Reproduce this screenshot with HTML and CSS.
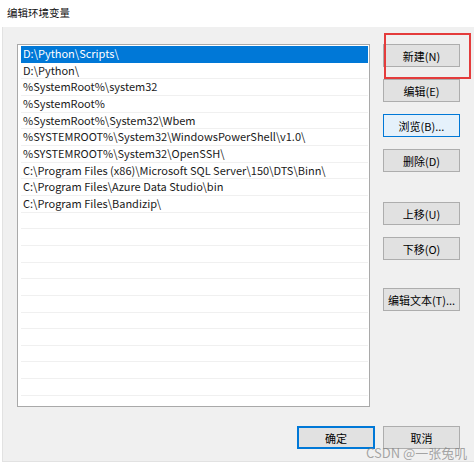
FILE: index.html
```html
<!DOCTYPE html>
<html lang="zh-CN">
<head>
<meta charset="utf-8">
<title>编辑环境变量</title>
<link rel="stylesheet" href="styles.css">
</head>
<body>
<div class="dialog">
  <div class="titlebar">编辑环境变量</div>
  <div class="panel">
    <div class="main">
      <div class="list">
        <div class="row selected">D:\Python\Scripts\</div>
        <div class="row">D:\Python\</div>
        <div class="row">%SystemRoot%\system32</div>
        <div class="row">%SystemRoot%</div>
        <div class="row">%SystemRoot%\System32\Wbem</div>
        <div class="row">%SYSTEMROOT%\System32\WindowsPowerShell\v1.0\</div>
        <div class="row">%SYSTEMROOT%\System32\OpenSSH\</div>
        <div class="row">C:\Program Files (x86)\Microsoft SQL Server\150\DTS\Binn\</div>
        <div class="row">C:\Program Files\Azure Data Studio\bin</div>
        <div class="row">C:\Program Files\Bandizip\</div>
        <div class="row"></div>
        <div class="row"></div>
        <div class="row"></div>
        <div class="row"></div>
        <div class="row"></div>
        <div class="row"></div>
        <div class="row"></div>
        <div class="row"></div>
        <div class="row"></div>
        <div class="row"></div>
        <div class="row"></div>
        <div class="row"></div>
        <div class="row"></div>
      </div>
      <div class="side">
        <button class="btn">新建(N)</button>
        <button class="btn">编辑(E)</button>
        <button class="btn focus">浏览(B)...</button>
        <button class="btn">删除(D)</button>
        <button class="btn gap-lg">上移(U)</button>
        <button class="btn">下移(O)</button>
        <button class="btn gap-md">编辑文本(T)...</button>
      </div>
    </div>
    <div class="footer">
      <button class="btn ok">确定</button>
      <button class="btn cancel">取消</button>
    </div>
  </div>
  <div class="highlight"></div>
  <div class="watermark">CSDN @一张兔叽</div>
</div>
</body>
</html>
```
FILE: styles.css
```css
* { box-sizing: border-box; }
html, body {
  margin: 0;
  padding: 0;
  background: #ffffff;
}
body {
  font-family: "Noto Sans CJK SC", "Noto Sans", sans-serif;
  font-size: 11px;
  color: #000;
}
.dialog {
  position: relative;
  width: 474px;
  height: 464px;
  overflow: hidden;
}
.titlebar {
  height: 27px;
  padding-left: 7px;
  padding-top: 5px;
  font-size: 10.5px;
  line-height: 16px;
  color: #111;
}
.panel {
  margin-left: 2px;
  height: 435px;
  background: #f0f0f0;
  border-left: 1px solid #e2e2e2;
  border-bottom: 1px solid #e2e2e2;
  padding: 17px 0 0 14px;
  display: flex;
  flex-direction: column;
}
.main {
  display: flex;
  gap: 13px;
}
.list {
  width: 353px;
  height: 363px;
  background: #fff;
  border: 1px solid #a9a9a9;
  padding: 1px 1px 0 3px;
  overflow: hidden;
}
.row {
  height: 16.67px;
  line-height: 15px;
  padding-left: 2px;
  border-bottom: 1px solid #f0f0f0;
  white-space: nowrap;
  font-size: 11px;
  color: #1a1a1a;
}
.row.selected {
  background: #0078d7;
  color: #fff;
  border-bottom-color: #0078d7;
}
.side {
  display: flex;
  flex-direction: column;
  gap: 12px;
}
.btn {
  width: 77px;
  height: 23px;
  padding: 0;
  margin: 0;
  background: #e1e1e1;
  border: 1px solid #adadad;
  font-family: "Noto Sans CJK SC", "Noto Sans", sans-serif;
  font-size: 11px;
  color: #000;
}
.btn.focus {
  background: #e5f1fb;
  border-color: #0078d7;
}
.side .gap-lg { margin-top: 18px; }
.side .gap-md { margin-top: 16px; }
.footer {
  display: flex;
  gap: 8px;
  margin-top: 19px;
  padding-left: 280px;
}
.btn.ok {
  width: 78px;
  border: 2px solid #0078d7;
}
.btn.cancel { width: 77px; }
.highlight {
  position: absolute;
  left: 384px;
  top: 33px;
  width: 87px;
  height: 46px;
  border: 2px solid #e43c3c;
}
.watermark {
  position: absolute;
  left: 366px;
  top: 445px;
  font-size: 13px;
  line-height: 16px;
  color: rgba(130, 130, 130, 0.7);
  white-space: nowrap;
}
```
